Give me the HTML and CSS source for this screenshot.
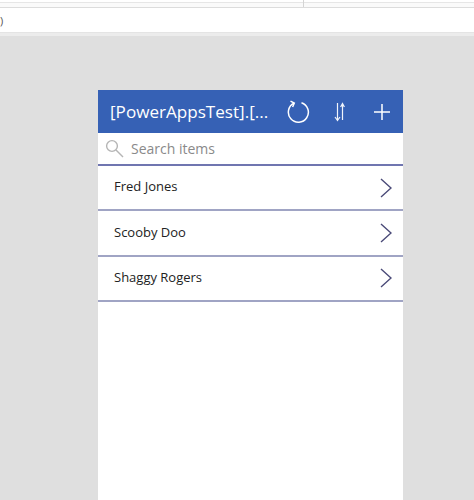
FILE: index.html
```html
<!DOCTYPE html>
<html lang="en">
<head>
  <meta charset="UTF-8" />
  <title>PowerApps - Browse</title>
  <link rel="stylesheet" href="styles.css">
</head>
<body>
<div class="top-strip"><span class="strip-tick"></span></div>
<div class="formula-bar"><span class="formula-text">)</span></div>
<div class="canvas">
  <div class="app">
    <div class="header">
      <div class="header-title">[PowerAppsTest].[...</div>
      <svg class="icon-refresh" width="24" height="24" viewBox="0 0 24 24" fill="none" stroke="#fff" stroke-width="1.5">
        <path d="M8 3.2 A10 10 0 1 0 15.5 2.7"/>
        <path d="M4.5 1.2 L8.3 3.2 L6.6 7"/>
      </svg>
      <svg class="icon-sort" width="14" height="24" viewBox="0 0 14 24" fill="none" stroke="#f1f4fb" stroke-width="1.2">
        <path d="M4.5 3 V20 M2 17 L4.5 20.5 L7 17"/>
        <path d="M9.5 20 V4 M7.6 7 L9.5 3.5 L11.4 7"/>
      </svg>
      <svg class="icon-add" width="16" height="16" viewBox="0 0 16 16" fill="none" stroke="#fff" stroke-width="1.5">
        <path d="M8 0 V16 M0 8 H16"/>
      </svg>
    </div>
    <div class="search">
      <svg width="19" height="19" viewBox="0 0 19 19" fill="none" stroke="#b5b5b5" stroke-width="1.4">
        <circle cx="7" cy="7" r="5.4"/>
        <path d="M11 11 L18 18"/>
      </svg>
      <span class="search-text">Search items</span>
    </div>
    <div class="row"><span class="row-name">Fred Jones</span><svg class="chevron" width="12" height="20" viewBox="0 0 12 20" fill="none" stroke="#4a4a78" stroke-width="1.4"><path d="M1 1 L11 10 L1 19"/></svg></div>
    <div class="row"><span class="row-name">Scooby Doo</span><svg class="chevron" width="12" height="20" viewBox="0 0 12 20" fill="none" stroke="#4a4a78" stroke-width="1.4"><path d="M1 1 L11 10 L1 19"/></svg></div>
    <div class="row"><span class="row-name">Shaggy Rogers</span><svg class="chevron" width="12" height="20" viewBox="0 0 12 20" fill="none" stroke="#4a4a78" stroke-width="1.4"><path d="M1 1 L11 10 L1 19"/></svg></div>
  </div>
</div>
</body>
</html>
```

FILE: styles.css
```css
html, body {
  height: 100%;
}
body {
  margin: 0;
  overflow: hidden;
  display: flex;
  flex-direction: column;
  font-family: 'Open Sans', Arial, sans-serif;
  background: #fff;
}
.top-strip {
  height: 7px;
  flex: none;
  display: flex;
  justify-content: flex-end;
  padding-right: 170px;
  border-bottom: 1px solid #dcdcdc;
  background: linear-gradient(#fff 2px, #e6e6e6 2px, #e6e6e6 3px, #fafafa 3px);
}
.strip-tick {
  width: 1px;
  background: #d4d4d4;
}
.formula-bar {
  height: 24px;
  flex: none;
  display: flex;
  align-items: center;
  background: #fff;
  border-bottom: 1px solid #e4e4e4;
}
.formula-text {
  font-size: 11px;
  color: #555;
}
.canvas {
  flex: 1;
  min-height: 0;
  padding: 54px 71px 0 98px;
  background: #dfdfdf;
  border-top: 3px solid #ececec;
}
.app {
  height: 100%;
  background: #fff;
}
.header {
  height: 43px;
  display: flex;
  align-items: center;
  padding-left: 12px;
  background: #3661b5;
  color: #fff;
}
.header-title {
  width: 176px;
  font-size: 17.1px;
  white-space: nowrap;
}
.icon-refresh {
  margin-right: 23px;
}
.icon-sort {
  margin-right: 27px;
}
.search {
  height: 31px;
  display: flex;
  align-items: center;
  gap: 7px;
  padding-left: 7px;
  border-bottom: 2px solid #7076b0;
}
.search-text {
  font-size: 14px;
  color: #8a8a8a;
}
.row {
  box-sizing: border-box;
  height: 45.4px;
  display: flex;
  align-items: center;
  justify-content: space-between;
  padding: 0 11px 0 16px;
  border-bottom: 2px solid #a0a4c4;
}
.row-name {
  margin-bottom: 3px;
  font-size: 13px;
  font-weight: 500;
  color: #222;
}
```
